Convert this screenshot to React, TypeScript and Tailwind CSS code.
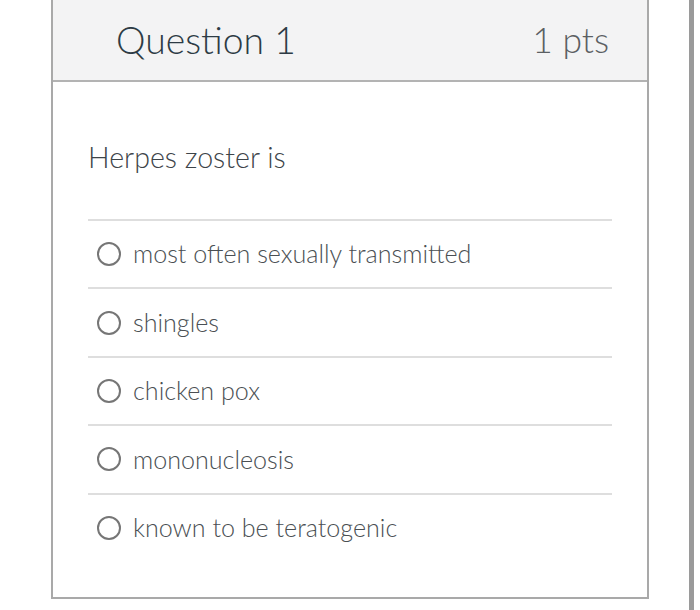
const answers = [
  "most often sexually transmitted",
  "shingles",
  "chicken pox",
  "mononucleosis",
  "known to be teratogenic",
];

export default function App() {
  return (
    <div
      className="flex h-[610px] w-[700px] bg-white font-light"
      style={{ fontFamily: "Lato, 'Open Sans', sans-serif" }}
    >
      <div className="ml-[51px] h-[599px] w-[598px] border-2 border-t-0 border-[#a9a9a9] flex flex-col">
        <div className="h-[82px] shrink-0 flex items-center justify-between bg-[#f3f3f4] border-b-2 border-[#b3b3b3] pl-[63px] pr-[38px]">
          <span className="text-[37.3px] text-[#2d3b45] leading-none">Question 1</span>
          <span className="text-[35.5px] text-[#5b5f63] leading-none">1 pts</span>
        </div>
        <div className="px-[35px] pt-[58px] pb-[33px]">
          <div className="text-[28.6px] leading-[34px] text-[#3d4449] mb-[45px]">Herpes zoster is</div>
          <div className="flex flex-col">
            {answers.map((a) => (
              <div key={a} className="h-[68.4px] border-t-2 border-[#dedede] flex items-center">
                <span className="ml-[9px] mr-[12px] h-[24px] w-[24px] rounded-full border-[2.5px] border-[#767676] shrink-0" />
                <span className="text-[25.1px] text-[#4a4f53]">{a}</span>
              </div>
            ))}
          </div>
        </div>
      </div>
      <div className="ml-auto mr-[6px] w-[5px] h-full bg-[#9a9a9a]" />
    </div>
  );
}
